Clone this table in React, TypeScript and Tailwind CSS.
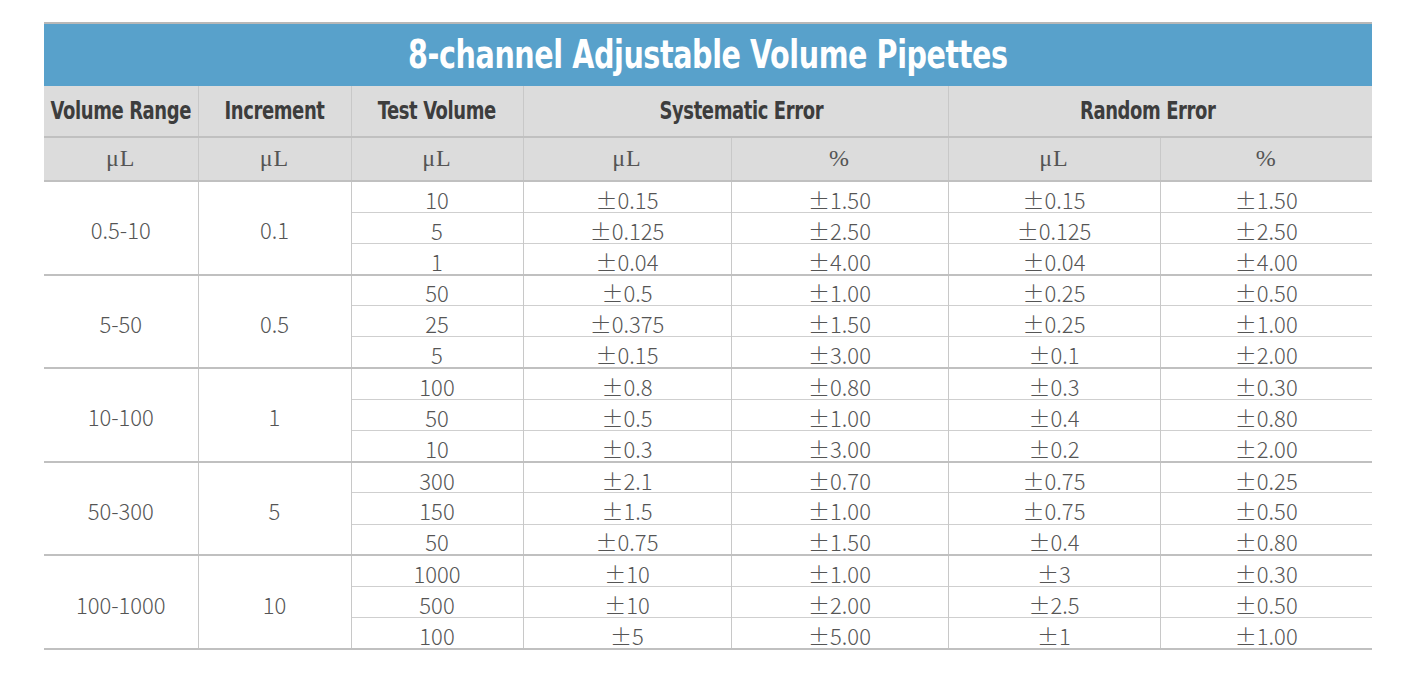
const groups = [
  {
    range: '0.5-10',
    inc: '0.1',
    rows: [
      ['10', '±0.15', '±1.50', '±0.15', '±1.50'],
      ['5', '±0.125', '±2.50', '±0.125', '±2.50'],
      ['1', '±0.04', '±4.00', '±0.04', '±4.00'],
    ],
  },
  {
    range: '5-50',
    inc: '0.5',
    rows: [
      ['50', '±0.5', '±1.00', '±0.25', '±0.50'],
      ['25', '±0.375', '±1.50', '±0.25', '±1.00'],
      ['5', '±0.15', '±3.00', '±0.1', '±2.00'],
    ],
  },
  {
    range: '10-100',
    inc: '1',
    rows: [
      ['100', '±0.8', '±0.80', '±0.3', '±0.30'],
      ['50', '±0.5', '±1.00', '±0.4', '±0.80'],
      ['10', '±0.3', '±3.00', '±0.2', '±2.00'],
    ],
  },
  {
    range: '50-300',
    inc: '5',
    rows: [
      ['300', '±2.1', '±0.70', '±0.75', '±0.25'],
      ['150', '±1.5', '±1.00', '±0.75', '±0.50'],
      ['50', '±0.75', '±1.50', '±0.4', '±0.80'],
    ],
  },
  {
    range: '100-1000',
    inc: '10',
    rows: [
      ['1000', '±10', '±1.00', '±3', '±0.30'],
      ['500', '±10', '±2.00', '±2.5', '±0.50'],
      ['100', '±5', '±5.00', '±1', '±1.00'],
    ],
  },
]

const cols = [154, 153, 172, 208, 217, 212, 212]

function Head({ children }: { children: React.ReactNode }) {
  return (
    <div className="flex justify-center">
      <span className="inline-block shrink-0 scale-x-[0.8] whitespace-nowrap font-['DejaVu_Sans_Condensed',sans-serif] text-[25px] font-bold tracking-[-0.5px] text-[#3d3d3d]">
        {children}
      </span>
    </div>
  )
}

export default function App() {
  const cell = 'border-x border-[#c8c8c8] text-center align-middle'
  return (
    <div className="min-h-screen bg-white pl-[44px] pt-[22px]">
      <table className="w-[1328px] table-fixed border-collapse font-['Noto_Sans_CJK_SC','Noto_Sans',sans-serif] text-[22px] font-light text-[#555]">
        <colgroup>
          {cols.map((w, i) => (
            <col key={i} style={{ width: w }} />
          ))}
        </colgroup>
        <thead>
          <tr className="h-[63px] border-t-2 border-[#b8b8b8] bg-[#58a1cb]">
            <th colSpan={7} className="p-0 text-center">
              <span className="inline-block scale-x-[0.815] whitespace-nowrap font-['DejaVu_Sans_Condensed',sans-serif] text-[39px] font-bold tracking-[-0.5px] text-white">
                8-channel Adjustable Volume Pipettes
              </span>
            </th>
          </tr>
          <tr className="h-[51px] bg-[#dcdcdc]">
            <th className={`${cell} border-l-0 p-0`}>
              <Head>Volume Range</Head>
            </th>
            <th className={`${cell} p-0`}>
              <Head>Increment</Head>
            </th>
            <th className={`${cell} p-0`}>
              <Head>Test Volume</Head>
            </th>
            <th colSpan={2} className={`${cell} p-0 pl-[12px]`}>
              <Head>Systematic Error</Head>
            </th>
            <th colSpan={2} className={`${cell} border-r-0 p-0 pr-[26px]`}>
              <Head>Random Error</Head>
            </th>
          </tr>
          <tr className="h-[44px] border-y-2 border-[#c0c0c0] bg-[#dcdcdc] font-['Liberation_Serif',serif] text-[24px] font-normal">
            {['μL', 'μL', 'μL', 'μL', '%', 'μL', '%'].map((u, i) => (
              <th
                key={i}
                className={`${cell} p-0 pb-[3px] font-normal tracking-[1px] ${i === 0 ? 'border-l-0' : ''} ${i === 6 ? 'border-r-0' : ''}`}
              >
                {u}
              </th>
            ))}
          </tr>
        </thead>
        <tbody>
          {groups.map((g) =>
            g.rows.map((r, j) => (
              <tr
                key={g.range + j}
                className={`h-[31.2px] ${j === 2 ? 'border-b-2 border-[#c0c0c0]' : 'border-b border-[#cfcfcf]'}`}
              >
                {j === 0 && (
                  <>
                    <td rowSpan={3} className={`${cell} border-l-0 border-b-2 border-b-[#c0c0c0] p-0 pt-[4px]`}>
                      {g.range}
                    </td>
                    <td rowSpan={3} className={`${cell} border-b-2 border-b-[#c0c0c0] p-0 pt-[4px]`}>
                      {g.inc}
                    </td>
                  </>
                )}
                {r.map((v, k) => (
                  <td
                    key={k}
                    className={`${cell} p-0 pt-[4px] leading-[24px] ${k === 4 ? 'border-r-0' : ''}`}
                  >
                    {v}
                  </td>
                ))}
              </tr>
            )),
          )}
        </tbody>
      </table>
    </div>
  )
}
